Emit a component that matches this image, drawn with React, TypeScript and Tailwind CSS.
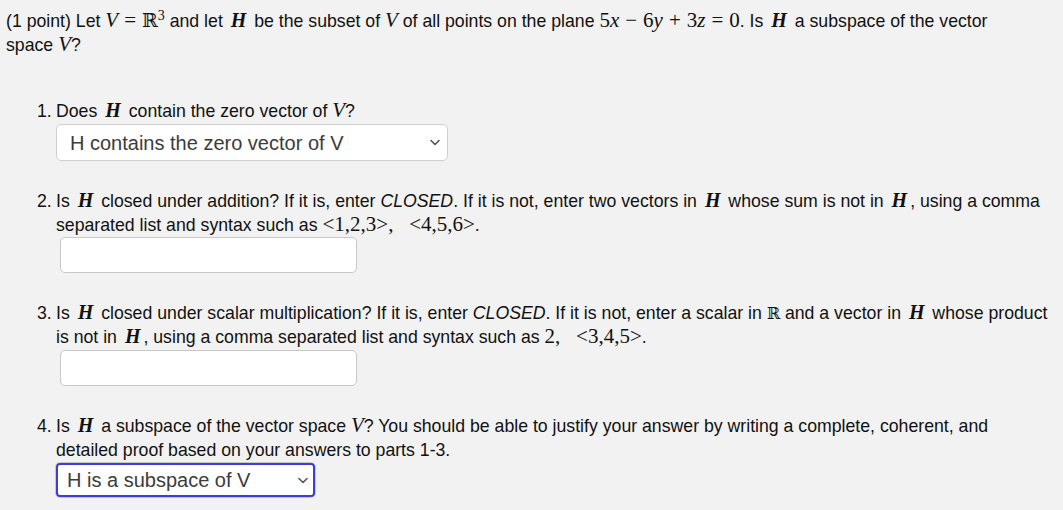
// ===================================
// Subspace question - WeBWorK style problem
// ===================================

const serif = "font-['Liberation_Serif',serif]"

const M = ({ children }: { children: React.ReactNode }) => (
  <span className={`${serif} italic text-[21px] leading-none`}>{children}</span>
)

const H = () => (
  <span className={`${serif} italic font-bold text-[20px] leading-none mx-[3px]`}>H</span>
)

const Op = ({ children }: { children: React.ReactNode }) => (
  <span className={`${serif} text-[21px] leading-none mx-[6px]`}>{children}</span>
)

const Chevron = () => (
  <svg width="10" height="7" viewBox="0 0 10 7" className="shrink-0">
    <path d="M1 1.5 L5 5.5 L9 1.5" fill="none" stroke="#555" strokeWidth="1.6" strokeLinecap="round" strokeLinejoin="round" />
  </svg>
)

const Item = ({ num, children }: { num: string; children: React.ReactNode }) => (
  <div className="flex pl-[37px] pt-[1px]">
    <span className="w-[19px] shrink-0">{num}</span>
    <div className="flex flex-col">{children}</div>
  </div>
)

const TextBox = () => (
  <div className="ml-[4px] w-[297px] h-[36px] bg-white border border-[#c8c8c8] rounded-[5px]" />
)

export default function App() {
  return (
    <div className="w-[1063px] h-[510px] bg-[#f2f2f2] text-[#111] font-['Liberation_Sans',Arial,sans-serif] text-[17.7px] leading-[24px] overflow-hidden">
      <div className="pl-[6px] pt-[9px] whitespace-nowrap">
        (1 point) Let <M>V</M>
        <Op>=</Op>
        <span className="font-['DejaVu_Serif',serif] text-[19px] leading-none">ℝ</span>
        <sup className={`${serif} text-[14px]`}>3</sup> and let <H /> be the subset of <M>V</M> of all points on the
        plane{' '}
        <span className={`${serif} text-[21px] leading-none`}>
          5<i>x</i>
          <Op>−</Op>6<i>y</i>
          <Op>+</Op>3<i>z</i>
          <Op>=</Op>0
        </span>
        . Is <H /> a subspace of the vector
        <br />
        space <M>V</M>?
      </div>

      <div className="mt-[41px] flex flex-col gap-[27px]">
        <Item num="1.">
          <div className="whitespace-nowrap">
            Does <H /> contain the zero vector of <M>V</M>?
          </div>
          <div className="mt-[1px] w-[392px] h-[37px] bg-white border border-[#cfcfcf] rounded-[5px] flex items-center justify-between pl-[13px] pr-[7px] text-[20px] text-[#3c3c3c]">
            <span>H contains the zero vector of V</span>
            <Chevron />
          </div>
        </Item>

        <Item num="2.">
          <div className="whitespace-nowrap">
            Is <H /> closed under addition? If it is, enter <i>CLOSED</i>. If it is not, enter two vectors in <H /> whose
            sum is not in <H />, using a comma
            <br />
            separated list and syntax such as{' '}
            <span className={`${serif} text-[21px] leading-none`}>&lt;1,2,3&gt;,&nbsp;&nbsp;&nbsp;&lt;4,5,6&gt;</span>.
          </div>
          <div>
            <TextBox />
          </div>
        </Item>

        <Item num="3.">
          <div className="whitespace-nowrap">
            Is <H /> closed under scalar multiplication? If it is, enter <i>CLOSED</i>. If it is not, enter a scalar in{' '}
            <span className="font-['DejaVu_Serif',serif] text-[16px] leading-none">ℝ</span> and a vector in <H /> whose
            product
            <br />
            is not in <H />, using a comma separated list and syntax such as{' '}
            <span className={`${serif} text-[21px] leading-none`}>2,&nbsp;&nbsp;&nbsp;&lt;3,4,5&gt;</span>.
          </div>
          <div className="mt-[1px]">
            <TextBox />
          </div>
        </Item>

        <Item num="4.">
          <div className="whitespace-nowrap">
            Is <H /> a subspace of the vector space <M>V</M>? You should be able to justify your answer by writing a
            complete, coherent, and
            <br />
            detailed proof based on your answers to parts 1-3.
          </div>
          <div className="-ml-[1px] w-[261px] h-[36px] border border-[#c8c8c8] rounded-[5px]">
            <div className="w-full h-full bg-white border-2 border-[#3b3fd6] rounded-[4px] flex items-center justify-between pl-[9px] pr-[5px] text-[20px] text-[#3c3c3c]">
              <span>H is a subspace of V</span>
              <Chevron />
            </div>
          </div>
        </Item>
      </div>
    </div>
  )
}
